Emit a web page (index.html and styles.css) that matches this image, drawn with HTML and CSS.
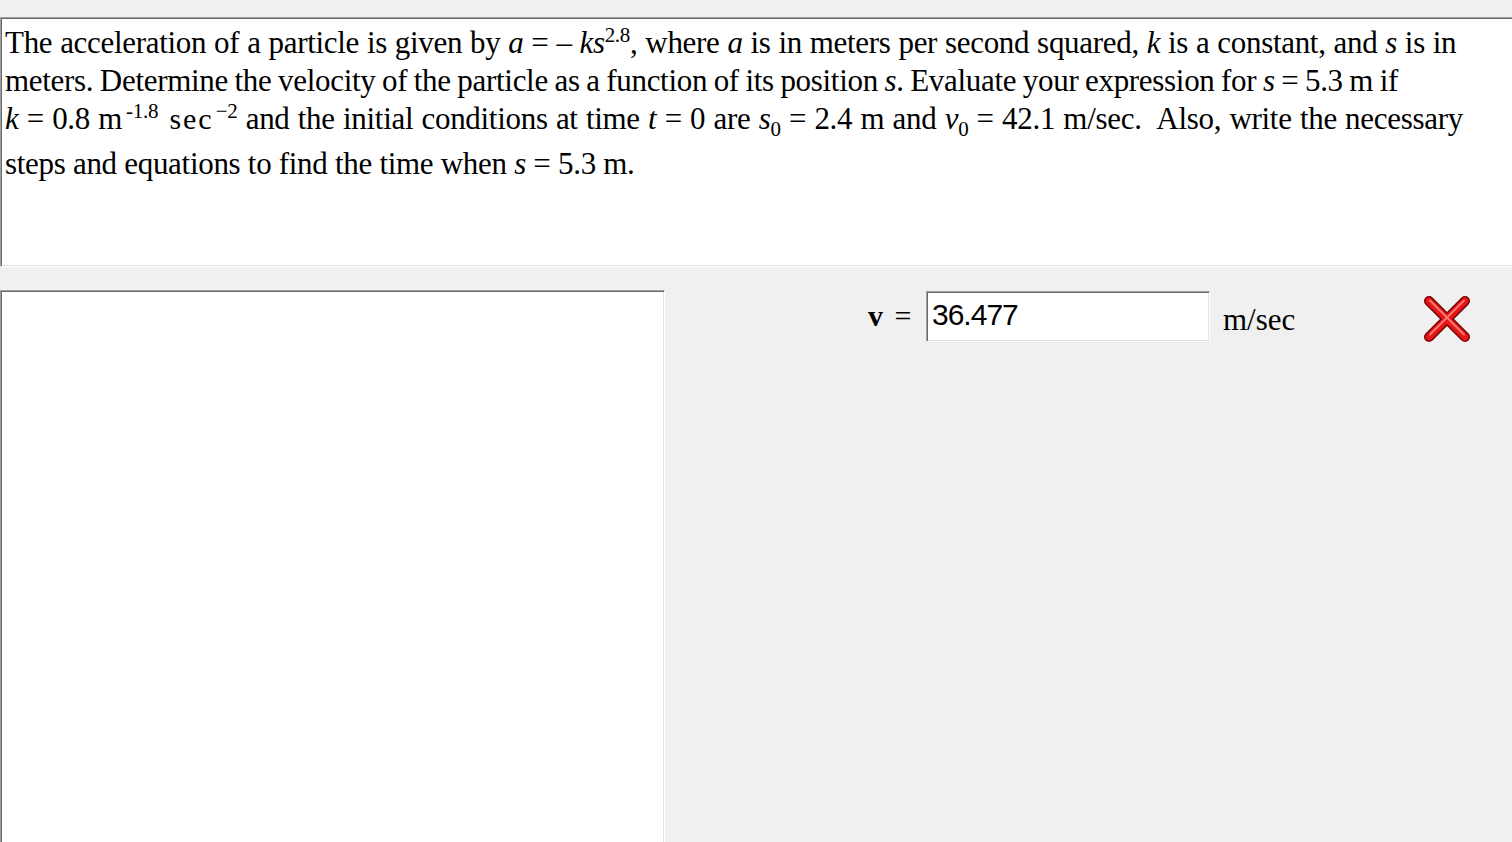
FILE: index.html
```html
<!DOCTYPE html>
<html>
<head>
<meta charset="utf-8">
<link rel="stylesheet" href="styles.css">
</head>
<body>
<div class="question">
  <div class="line l1">The acceleration of a particle is given by <i>a</i> = – <i>ks</i><sup>2.8</sup>, where <i>a</i> is in meters per second squared, <i>k</i> is a constant, and <i>s</i> is in</div>
  <div class="line l2">meters. Determine the velocity of the particle as a function of its position <i>s</i>. Evaluate your expression for <i>s</i> = 5.3 m if</div>
  <div class="line l3"><i>k</i> = 0.8 m<sup class="exp">-1.8</sup> <span class="sec">sec</span><sup>−2</sup> and the initial conditions at time <i>t</i> = 0 are <i>s</i><sub>0</sub> = 2.4 m and <i>v</i><sub>0</sub> = 42.1 m/sec.&nbsp; Also, write the necessary</div>
  <div class="line l4">steps and equations to find the time when <i>s</i> = 5.3 m.</div>
</div>
<div class="answer-row">
  <div class="work"></div>
  <div class="field">
    <span class="label"><b>v</b> =</span>
    <div class="input">36.477</div>
    <span class="unit">m/sec</span>
    <svg class="mark" width="48" height="48" viewBox="0 0 48 48">
      <g stroke-linecap="round">
        <line x1="6" y1="6" x2="42" y2="42" stroke="#7a0000" stroke-width="10"/>
        <line x1="42" y1="6" x2="6" y2="42" stroke="#7a0000" stroke-width="10"/>
        <line x1="6" y1="6" x2="42" y2="42" stroke="#e41616" stroke-width="7"/>
        <line x1="42" y1="6" x2="6" y2="42" stroke="#e41616" stroke-width="7"/>
        <line x1="7" y1="5.5" x2="41" y2="39.5" stroke="#f77" stroke-width="2"/>
        <line x1="41" y1="5.5" x2="7" y2="39.5" stroke="#f77" stroke-width="2"/>
      </g>
    </svg>
  </div>
</div>
</body>
</html>
```

FILE: styles.css
```css
html, body {
  margin: 0;
  padding: 0;
  background: #f0f0f0;
  overflow: hidden;
  height: 842px;
}
body {
  font-family: "Liberation Serif", "Times New Roman", serif;
  color: #000;
}
.question {
  margin-top: 17px;
  width: 1540px;
  height: 248px;
  background: #fff;
  border-style: solid;
  border-width: 1px;
  border-color: #a0a0a0 #fff #fff #a0a0a0;
  box-shadow: inset 1px 1px 0 #696969, inset -1px -1px 0 #e3e3e3;
  padding: 0 0 0 4px;
  font-size: 31px;
  box-sizing: content-box;
}
.line {
  white-space: nowrap;
  height: 38px;
  line-height: 38px;
  letter-spacing: -0.3px;
}
.l1 { margin-top: 6px; word-spacing: 0.4px; }
.l2 { word-spacing: -0.9px; }
.l3 { word-spacing: 0.8px; }
.l4 { margin-top: 7px; }
.line i { font-style: italic; }
sup, sub {
  font-size: 21px;
  line-height: 0;
  position: relative;
}
sup { vertical-align: baseline; top: -11px; }
sub { vertical-align: baseline; top: 7px; }
.exp { margin-left: 4px; margin-right: 3px; }
.sec { letter-spacing: 2px; font-size: 30px; margin-right: 2px; }
.answer-row {
  display: flex;
  margin-top: 23px;
  align-items: flex-start;
}
.work {
  width: 663px;
  height: 560px;
  background: #fff;
  border-style: solid;
  border-width: 1px;
  border-color: #a0a0a0 #fff #fff #a0a0a0;
  box-shadow: inset 1px 1px 0 #696969, inset -1px -1px 0 #e3e3e3;
  flex: none;
}
.field {
  display: flex;
  align-items: center;
  margin-left: 203px;
  margin-top: -1px;
}
.label {
  font-size: 30px;
  width: 58px;
  letter-spacing: 2px;
}
.input {
  width: 274px;
  height: 45px;
  background: #fff;
  border-style: solid;
  border-width: 1px;
  border-color: #a0a0a0 #fff #fff #a0a0a0;
  box-shadow: inset 1px 1px 0 #696969, inset -1px -1px 0 #e3e3e3;
  padding: 2px 3px 2px 5px;
  font-family: "Liberation Sans", Arial, sans-serif;
  font-size: 30px;
  line-height: 42px;
  letter-spacing: -1px;
}
.unit {
  font-size: 31px;
  margin-left: 13px;
  margin-top: 8px;
}
.mark {
  margin-left: 128px;
  margin-top: 6px;
}
```
